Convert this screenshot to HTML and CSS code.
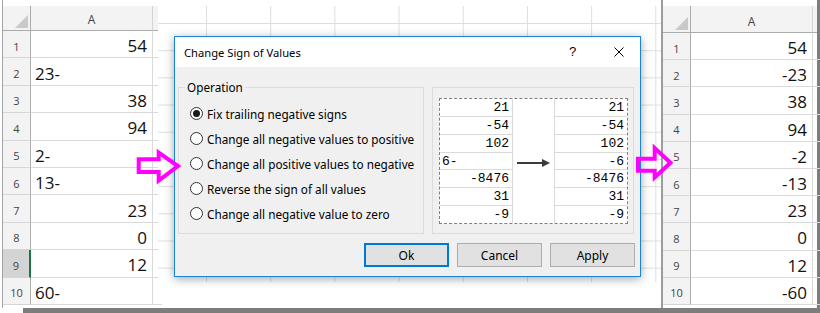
FILE: index.html
```html
<!DOCTYPE html>
<html>
<head>
<meta charset="utf-8">
<title>Change Sign of Values</title>
<link rel="stylesheet" href="styles.css">
</head>
<body>
<div class="frame">
  <section class="sheet sheet-left">
    <div class="grid">
      <div class="hdr corner"><span class="tri"></span></div>
      <div class="hdr col">A</div>
      <div class="hdr colb"></div>
      <div class="rh">1</div><div class="cell num">54</div><div class="cell cb"></div>
      <div class="rh">2</div><div class="cell">23-</div><div class="cell cb"></div>
      <div class="rh">3</div><div class="cell num">38</div><div class="cell cb"></div>
      <div class="rh">4</div><div class="cell num">94</div><div class="cell cb"></div>
      <div class="rh">5</div><div class="cell">2-</div><div class="cell cb"></div>
      <div class="rh">6</div><div class="cell">13-</div><div class="cell cb"></div>
      <div class="rh">7</div><div class="cell num">23</div><div class="cell cb"></div>
      <div class="rh">8</div><div class="cell num">0</div><div class="cell cb"></div>
      <div class="rh sel">9</div><div class="cell num">12</div><div class="cell cb"></div>
      <div class="rh">10</div><div class="cell">60-</div><div class="cell cb"></div>
    </div>
  </section>

  <section class="middle">
    <div class="bgsheet">
      <div class="dialog">
        <div class="titlebar">
          <span class="title">Change Sign of Values</span>
          <span class="help">?</span>
          <span class="close">
            <svg width="10" height="10" viewBox="0 0 10 10"><path d="M0.5 0.5 L9.5 9.5 M9.5 0.5 L0.5 9.5" stroke="#000" stroke-width="1" fill="none"/></svg>
          </span>
        </div>
        <div class="dlg-body">
          <div class="groups">
            <div class="group group-op">
              <div class="legend">Operation</div>
              <div class="options">
                <div class="opt"><span class="radio on"></span><span>Fix trailing negative signs</span></div>
                <div class="opt"><span class="radio"></span><span>Change all negative values to positive</span></div>
                <div class="opt"><span class="radio"></span><span>Change all positive values to negative</span></div>
                <div class="opt"><span class="radio"></span><span>Reverse the sign of all values</span></div>
                <div class="opt"><span class="radio"></span><span>Change all negative value to zero</span></div>
              </div>
            </div>
            <div class="group group-prev">
              <div class="ptable">
                <div class="pcol">
                  <div class="prow">21</div>
                  <div class="prow">-54</div>
                  <div class="prow">102</div>
                  <div class="prow left">6-</div>
                  <div class="prow">-8476</div>
                  <div class="prow">31</div>
                  <div class="prow">-9</div>
                </div>
                <div class="pmid">
                  <svg width="34" height="10" viewBox="0 0 34 10"><path d="M0 5 H26" stroke="#3c3c3c" stroke-width="2"/><path d="M25 1 L33 5 L25 9 Z" fill="#3c3c3c"/></svg>
                </div>
                <div class="pcol">
                  <div class="prow">21</div>
                  <div class="prow">-54</div>
                  <div class="prow">102</div>
                  <div class="prow">-6</div>
                  <div class="prow">-8476</div>
                  <div class="prow">31</div>
                  <div class="prow">-9</div>
                </div>
              </div>
            </div>
          </div>
          <div class="buttons">
            <button class="btn default">Ok</button>
            <button class="btn">Cancel</button>
            <button class="btn">Apply</button>
          </div>
        </div>
      </div>
    </div>
  </section>

  <section class="sheet sheet-right">
    <div class="grid">
      <div class="hdr corner"><span class="tri"></span></div>
      <div class="hdr col">A</div>
      <div class="hdr colb"></div>
      <div class="rh">1</div><div class="cell num">54</div><div class="cell cb"></div>
      <div class="rh">2</div><div class="cell num">-23</div><div class="cell cb"></div>
      <div class="rh">3</div><div class="cell num">38</div><div class="cell cb"></div>
      <div class="rh">4</div><div class="cell num">94</div><div class="cell cb"></div>
      <div class="rh">5</div><div class="cell num">-2</div><div class="cell cb"></div>
      <div class="rh">6</div><div class="cell num">-13</div><div class="cell cb"></div>
      <div class="rh">7</div><div class="cell num">23</div><div class="cell cb"></div>
      <div class="rh">8</div><div class="cell num">0</div><div class="cell cb"></div>
      <div class="rh">9</div><div class="cell num">12</div><div class="cell cb"></div>
      <div class="rh">10</div><div class="cell num">-60</div><div class="cell cb"></div>
    </div>
  </section>

  <svg class="arrow arrow-left" width="50" height="40" viewBox="0 0 50 40">
    <polygon points="4.7,12.3 24.7,12.3 24.7,5.5 44,19 24.7,33.5 24.7,25 4.7,25" fill="none" stroke="#ff00ff" stroke-width="4" stroke-linejoin="miter"/>
  </svg>
  <svg class="arrow arrow-right" width="50" height="44" viewBox="0 0 50 44">
    <polygon points="7,16.7 23.7,16.7 23.7,6 39.5,20.7 23.7,35.5 23.7,28.7 7,28.7" fill="none" stroke="#ff00ff" stroke-width="4" stroke-linejoin="miter"/>
  </svg>
</div>
</body>
</html>
```

FILE: styles.css
```css
* { box-sizing: border-box; }
html, body { margin: 0; padding: 0; background: #fff; }
body { width: 820px; height: 313px; overflow: hidden; }

.frame {
  position: relative;
  display: flex;
  width: 817px;
  height: 308px;
  background: #fff;
  box-shadow: 13px 15px 0 -10px #7d7d7d, 3px 0 0 #7d7d7d;
}

/* ---------- spreadsheets ---------- */
.sheet {
  padding-top: 6px;
  font-family: "Open Sans", sans-serif;
}
.sheet-left { margin-left: 2px; border-left: 1px solid #a3a3a3; }
.sheet-right { border-left: 2px solid #9c9c9c; }

.grid { display: grid; }
.sheet-left .grid {
  grid-template-columns: 28px 122px 5px;
  grid-template-rows: 25px repeat(10, 27.4px);
}
.sheet-right .grid {
  grid-template-columns: 28px 122px 4px;
  grid-template-rows: 27px repeat(10, 27.2px);
}

.hdr {
  background: #f3f3f3;
  border-bottom: 1px solid #ababab;
  border-right: 1px solid #d4d4d4;
  font-size: 12px;
  color: #444;
  display: flex;
  align-items: flex-end;
  justify-content: center;
  padding-bottom: 1px;
  line-height: 1;
}
.hdr.col { padding-bottom: 4px; }
.hdr.colb { border-right: 0; }
.corner {
  border-right-color: #ababab;
  justify-content: flex-end;
  padding: 0 2px 2px 0;
}
.tri {
  width: 13px;
  height: 13px;
  background: #c9c9c9;
  clip-path: polygon(100% 0, 100% 100%, 0 100%);
}

.rh {
  background: #f3f3f3;
  border-right: 1px solid #ababab;
  border-bottom: 1px solid #d6d6d6;
  font-size: 11px;
  color: #444;
  display: flex;
  align-items: center;
  justify-content: center;
  padding-top: 4px;
  line-height: 1;
}
.rh.sel {
  background: #d4d4d4;
  border-right: 2px solid #217346;
}

.cell {
  border-right: 1px solid #dadada;
  border-bottom: 1px solid #dadada;
  font-size: 17px;
  color: #111;
  display: flex;
  align-items: center;
  padding: 3px 5px 0 4px;
  line-height: 1;
}
.cell.num { justify-content: flex-end; }
.cell.cb { border-right: 0; }

/* ---------- middle (sheet behind the dialog) ---------- */
.middle { width: 504px; }
.bgsheet {
  margin-top: 6px;
  height: 276px;
  padding: 30px 0 0 16px;
  background-color: #fff;
  background-image:
    linear-gradient(to right, #dedede 1px, transparent 1px),
    linear-gradient(to bottom, #dedede 1px, transparent 1px);
  background-size: 64.2px 100%, 100% 27.2px;
  background-position: 48px 0, 0 17px;
}

.dialog {
  width: 467px;
  height: 241px;
  border: 1px solid #1883d7;
  background: #f0f0f0;
  box-shadow: 0 2px 9px rgba(0, 0, 0, 0.35);
  display: flex;
  flex-direction: column;
  font-family: "Noto Sans", sans-serif;
  font-size: 11.75px;
  color: #000;
}

.titlebar {
  height: 30px;
  background: #fff;
  display: flex;
  align-items: center;
  padding-left: 9px;
}
.title { flex: 1; font-size: 11.2px; }
.help {
  width: 50px;
  text-align: center;
  font-family: "Liberation Mono", monospace;
  font-size: 13px;
}
.close {
  width: 42px;
  display: flex;
  align-items: center;
  justify-content: center;
}

.dlg-body {
  flex: 1;
  display: flex;
  flex-direction: column;
  padding: 20px 5px 0 3px;
}
.groups {
  display: flex;
  gap: 8px;
  height: 147px;
}
.group { border: 1px solid #dcdcdc; }
.group-op { width: 246px; }
.legend {
  margin: -9px 0 0 6px;
  padding: 0 2px;
  width: max-content;
  line-height: 16px;
  background: #f0f0f0;
}
.options {
  margin-top: 6px;
  padding-left: 11px;
  display: flex;
  flex-direction: column;
}
.opt {
  height: 25px;
  display: flex;
  align-items: center;
  gap: 4px;
}
.radio {
  width: 13px;
  height: 13px;
  border: 1px solid #333;
  border-radius: 50%;
  background: #fff;
  display: flex;
  align-items: center;
  justify-content: center;
  flex: none;
}
.radio.on::after {
  content: "";
  width: 7px;
  height: 7px;
  border-radius: 50%;
  background: #1a1a1a;
}

.group-prev {
  width: 202px;
  padding: 10px 0 0 6px;
}
.ptable {
  width: 189px;
  height: 126px;
  border: 1px dashed #7f7f7f;
  background: #fff;
  display: grid;
  grid-template-columns: 72px 43px 72px;
}
.pcol { display: flex; flex-direction: column; }
.prow {
  flex: 1;
  border-bottom: 1px solid #dadada;
  display: flex;
  align-items: center;
  justify-content: flex-end;
  padding-right: 3px;
  font-family: "Liberation Mono", monospace;
  font-size: 13px;
  line-height: 1;
}
.prow:last-child { border-bottom: 0; }
.prow.left { justify-content: flex-start; padding-left: 2px; }
.pmid {
  border-left: 1px solid #dadada;
  border-right: 1px solid #dadada;
  display: flex;
  align-items: center;
  justify-content: center;
  padding-top: 3px;
}

.buttons {
  margin-top: 9px;
  display: flex;
  justify-content: flex-end;
  gap: 8px;
}
.btn {
  width: 85px;
  height: 24px;
  background: #e1e1e1;
  border: 1px solid #adadad;
  font: inherit;
  font-size: 12px;
  color: #000;
  padding: 0;
  display: flex;
  align-items: center;
  justify-content: center;
}
.btn.default { border: 2px solid #0078d7; }

/* ---------- overlay arrows ---------- */
.arrow { position: absolute; }
.arrow-left { left: 134px; top: 147px; }
.arrow-right { left: 631px; top: 142px; }
```
